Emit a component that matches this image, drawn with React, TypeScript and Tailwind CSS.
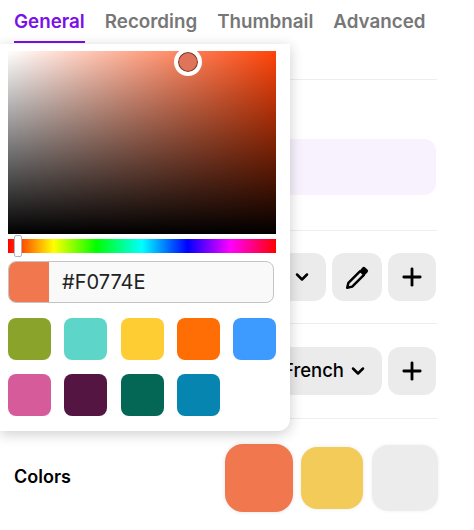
import { ChevronDown, Plus } from "lucide-react";

const presets = [
  "bg-[#8aa32b]",
  "bg-[#5dd6c9]",
  "bg-[#fdcd33]",
  "bg-[#ff6d05]",
  "bg-[#3d9bff]",
  "bg-[#d65b9b]",
  "bg-[#541543]",
  "bg-[#046756]",
  "bg-[#0585b0]",
];

const PencilIcon = () => (
  <svg width="25" height="25" viewBox="0 0 25 25" fill="none">
    <path
      d="M15.4 5.8 3.4 17.8 2.2 22.8l5-1.2 12-12"
      stroke="#000"
      strokeWidth="2.5"
      strokeLinejoin="round"
    />
    <path
      d="M14 6.6 17.4 2.6a2 2 0 0 1 2.8-.2l2.2 2a2 2 0 0 1 .2 2.8L19 11z"
      fill="#000"
    />
  </svg>
);

const ColorPicker = () => (
  <div className="absolute top-[44px] left-0 h-[387px] w-[290px] rounded-br-xl bg-white px-2 pt-[7px] shadow-[0_3px_14px_rgba(0,0,0,0.2)]">
    <div className="relative h-[183px] w-[268px] overflow-hidden bg-[linear-gradient(to_top,#000,transparent),linear-gradient(to_right,#fff,#ff4409)]">
      <div className="absolute top-[-3px] left-[166px] h-[28px] w-[28px] rounded-full border-[4px] border-white bg-[#e0745a] shadow-[inset_0_0_0_1px_rgba(60,30,20,0.7)]" />
    </div>
    <div className="relative mt-[5px] h-[14px] w-[268px] bg-[linear-gradient(to_right,#f00,#ff0_17%,#0f0_33%,#0ff_50%,#00f_67%,#f0f_83%,#f00)]">
      <div className="absolute top-[-4px] left-[6px] h-[22px] w-[8px] rounded-[2px] border border-[#aab4c4] bg-white" />
    </div>
    <div className="mt-[8px] flex h-[42px] w-[266px] overflow-hidden rounded-lg border-[1.5px] border-[#c4c4c4] bg-[#f9f9f9]">
      <div className="h-full w-[40px] bg-[#f0774e]" />
      <div className="flex items-center pl-[13px] text-[20px] text-[#222]">#F0774E</div>
    </div>
    <div className="mt-[15px] grid w-[268px] grid-cols-[repeat(5,43px)] gap-x-[13.25px] gap-y-[14px]">
      {presets.map((color) => (
        <div key={color} className={`h-[42px] w-[43px] rounded-lg ${color}`} />
      ))}
    </div>
  </div>
);

export default function App() {
  return (
    <div className="relative h-[530px] w-[474px] overflow-hidden bg-white font-['Inter',sans-serif]">
      {/* Tabs */}
      <div className="flex gap-5 px-[14px] pt-[8px] text-[18.8px] font-semibold text-[#777]">
        <div className="h-[35px] border-b-[2px] border-[#7a10ea] text-[#7a10ea]">General</div>
        <div>Recording</div>
        <div>Thumbnail</div>
        <div>Advanced</div>
      </div>

      <div className="w-[437px] pl-[14px]">
        <div className="mt-[36px] border-b border-[#eeeeee]" />

        <div className="mt-[59px] mr-[1px] h-[56px] rounded-xl bg-[#f7f2fe]" />
        <div className="mt-[35px] border-b border-[#eeeeee]" />

        <div className="mt-[22px] flex h-12 items-center justify-end gap-[6px] pr-[1px]">
          <button className="flex h-12 w-[100px] items-center justify-end rounded-xl bg-[#ebebeb] pr-[14px] text-black">
            <ChevronDown size={20} strokeWidth={3} />
          </button>
          <button className="flex h-12 w-[50px] items-center justify-center rounded-xl bg-[#ebebeb] text-black">
            <PencilIcon />
          </button>
          <button className="flex h-12 w-12 items-center justify-center rounded-xl bg-[#ebebeb] text-black">
            <Plus size={28} strokeWidth={2.4} />
          </button>
        </div>
        <div className="mt-[22px] border-b border-[#eeeeee]" />

        <div className="mt-[23px] flex h-12 items-center justify-end gap-[6px] pr-[1px]">
          <button className="flex h-12 w-[130px] items-center justify-end gap-[4px] rounded-xl bg-[#ebebeb] pr-[14px] text-[18.5px] font-medium text-black">
            French
            <ChevronDown size={20} strokeWidth={3} />
          </button>
          <button className="flex h-12 w-12 items-center justify-center rounded-xl bg-[#ebebeb] text-black">
            <Plus size={28} strokeWidth={2.4} />
          </button>
        </div>
        <div className="mt-[23px] border-b border-[#eeeeee]" />

        {/* Colors */}
        <div className="mt-[25px] -mr-[1px] flex h-[68px] items-center">
          <span className="pb-[4px] text-[18px] font-semibold text-black">Colors</span>
          <div className="ml-auto flex items-center">
            <div className="h-[68px] w-[68px] rounded-[18px] bg-[#f0774e] shadow-[0_0_4px_rgba(0,0,0,0.12)]" />
            <div className="ml-[8px] h-[62px] w-[62px] rounded-2xl bg-[#f2cb58] shadow-[0_0_4px_rgba(0,0,0,0.08)]" />
            <div className="ml-[9px] h-[66px] w-[66px] rounded-2xl bg-[#ececec] shadow-[0_0_4px_rgba(0,0,0,0.06)]" />
          </div>
        </div>
      </div>

      <ColorPicker />
    </div>
  );
}
